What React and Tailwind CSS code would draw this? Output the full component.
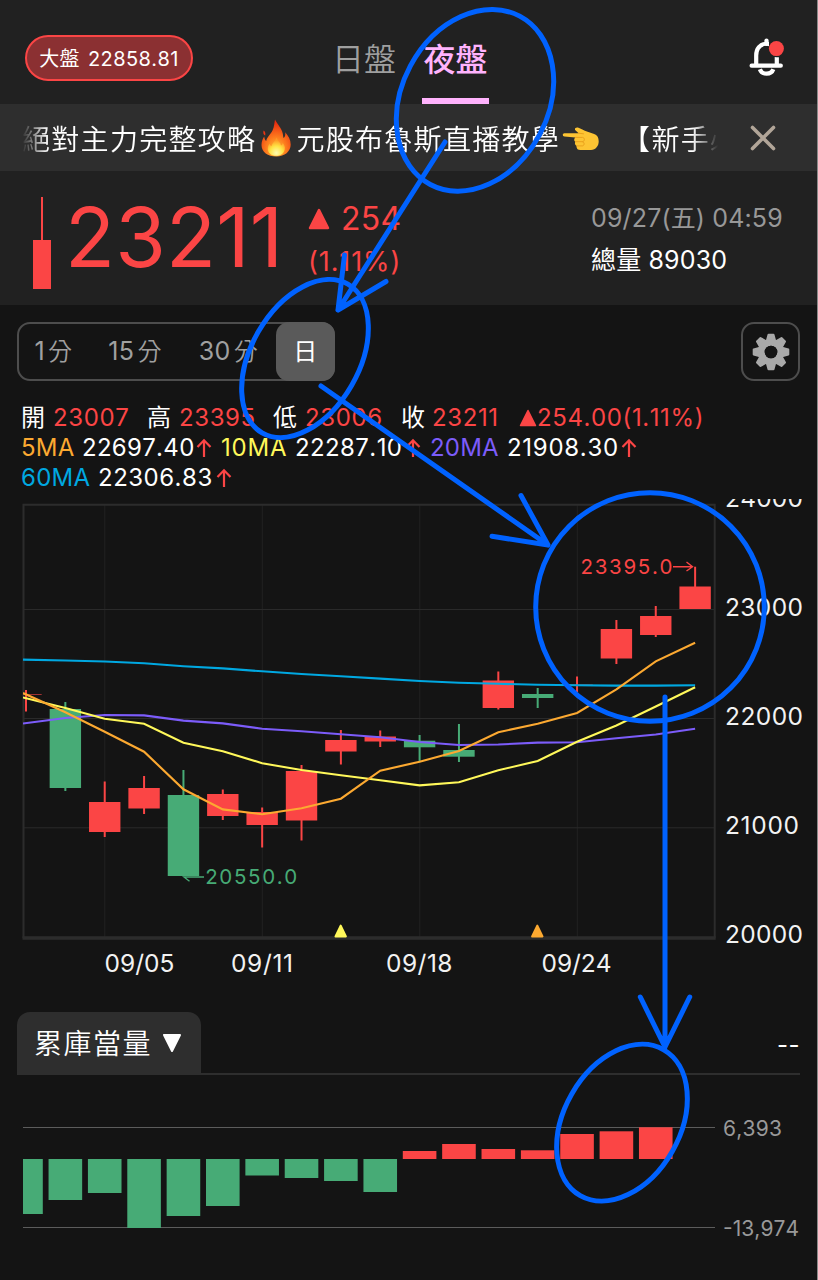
const RED = '#fb4545';
const GREEN = '#47ab76';

// distance between two trading days on the charts
const STEP = 39.36;
const dayX = (i) => 26 + i * STEP;

// [open/close top, bottom, wick top, wick bottom, color]
const candles = [
  [694, 695, 690, 711.5, RED],
  [709, 788, 702, 791, GREEN],
  [802, 832, 781.5, 837, RED],
  [788, 808.5, 776, 814, RED],
  [795, 876, 770, 876, GREEN],
  [794, 816, 789.5, 820, RED],
  [812, 825, 807.5, 847.5, RED],
  [771, 820.5, 765, 840.5, RED],
  [740, 751.5, 730, 764.5, RED],
  [736.5, 741.5, 730.5, 747, RED],
  [740.7, 747.3, 735, 761, GREEN],
  [750, 756.7, 724, 762, GREEN],
  [680.5, 708, 671.5, 709.5, RED],
  [694, 698, 688, 708, GREEN],
  [684.3, 685.3, 676.5, 692, RED],
  [629, 658.5, 620, 664, RED],
  [616, 635, 606, 637, RED],
  [586.5, 609, 566.7, 609, RED],
];

const averages = [
  {
    id: '60MA',
    color: '#00a8e1',
    values: [659.6, 660.5, 661.5, 663.3, 666.2, 668.4, 671.3, 674, 676.3, 678.6, 681, 682.7, 683.8, 684.8, 685.3, 685.6, 685.6, 685.2],
  },
  {
    id: '20MA',
    color: '#7c5cfa',
    values: [723.5, 718, 715, 715.4, 720.6, 723.4, 728.7, 731.2, 734.3, 737.2, 742, 745, 744.5, 742.6, 742.3, 738.3, 734.5, 728.7],
  },
  {
    id: '10MA',
    color: '#fff85a',
    values: [697.5, 708, 718.7, 723.7, 742.7, 751.2, 763.2, 770, 775.3, 780.3, 785.4, 782.3, 770.3, 761, 741.7, 725.5, 706.5, 687.3],
  },
  {
    id: '5MA',
    color: '#fca931',
    values: [693, 712.3, 731.7, 751.7, 789.3, 809.4, 814.3, 808.3, 798.7, 770.7, 761.7, 751, 732.3, 723.7, 713, 689.3, 661.3, 642.7],
  },
];

const priceLabels = [
  { y: 507, label: '24000' },
  { y: 616.3, label: '23000' },
  { y: 725.3, label: '22000' },
  { y: 834.3, label: '21000' },
  { y: 943.3, label: '20000' },
];

const dateLabels = [
  { x: 104.5, label: '09/05', width: 70 },
  { x: 231, label: '09/11', width: 62 },
  { x: 386, label: '09/18', width: 66.5 },
  { x: 541.5, label: '09/24', width: 70 },
];

// positive values sit above the zero line, negative ones below
const volumes = [-55, -41, -34, -69, -57, -47, -16.5, -19, -22, -33, 8, 15, 10, 8.7, 25, 27.7, 31.7];

function BellIcon() {
  return (
    <svg className="h-[40px] w-[38px]" viewBox="0 0 38 40" fill="none">
      <path d="M8.2 28V18.5C8.2 11.5 12 7.2 18.5 6.5C25 7.2 28.8 11.5 28.8 18.5V28" stroke="#fff" strokeWidth="4.2" />
      <path d="M18.5 7V3.5" stroke="#fff" strokeWidth="4.2" strokeLinecap="round" />
      <path d="M3.6 28.7H32.8" stroke="#fff" strokeWidth="4.2" strokeLinecap="round" />
      <path d="M11.9 32.3C13 35.4 15.4 36.7 18.6 36.7C21.8 36.7 24.2 35.4 25.3 32.3" stroke="#fff" strokeWidth="4.2" />
      <path d="M21 1H34V20.3H28.5C23.5 20.3 21 16.5 21 11.5Z" fill="#212121" />
      <circle cx="28.4" cy="11.6" r="7.5" fill={RED} />
    </svg>
  );
}

function GearIcon() {
  return (
    <svg className="size-[38px]" viewBox="-19 -19 38 38" fill="#a9a9a9">
      {[0, 45, 90, 135, 180, 225, 270, 315].map((angle) => (
        <path
          key={angle}
          d="M-4.2 -11L-2.5 -17.3H2.5L4.2 -11Z"
          stroke="#a9a9a9"
          strokeWidth="2"
          strokeLinejoin="round"
          transform={`rotate(${angle})`}
        />
      ))}
      <circle r="9.6" fill="none" stroke="#a9a9a9" strokeWidth="6.6" />
      <circle r="6.3" fill="#141414" />
    </svg>
  );
}

function FireIcon() {
  return (
    <svg className="h-[38px] w-[30px]" viewBox="0 0 30 38">
      <defs>
        <radialGradient id="flame" cx="0.5" cy="0.82" r="0.75">
          <stop offset="0" stopColor="#ffc83a" />
          <stop offset="0.45" stopColor="#fd7d1e" />
          <stop offset="1" stopColor="#e8290f" />
        </radialGradient>
        <radialGradient id="flameCore" cx="0.5" cy="0.85" r="0.7">
          <stop offset="0" stopColor="#fffcb0" />
          <stop offset="0.55" stopColor="#ffe344" />
          <stop offset="1" stopColor="#ff9a26" />
        </radialGradient>
      </defs>
      <path
        d="M14 0.5C15 3 19.5 8 21.2 12.5C22.3 15.5 22 18 22.6 19C24.2 18 24.6 15.3 24.2 13.2C27.2 16.5 29.7 20.8 29.7 25.5C29.7 32.5 23.7 37.5 15.3 37.5C6.8 37.5 0.5 33 0.5 26C0.5 22 2 19.5 3.2 17.5C3.5 19.5 4 21.3 5.2 22C6.2 17.5 9.7 15.3 11.6 11.3C13.4 7.5 13.2 4 14 0.5Z"
        fill="url(#flame)"
      />
      <path d="M2.6 11.5C4 12.4 4.7 14 4.2 16.4C2.4 15.7 1.9 13.6 2.6 11.5Z" fill="#ee3513" />
      <path
        d="M15.6 18.5C16 21.5 19.7 23.4 20 26.5C21.4 25.8 21.6 24.7 21.7 23.7C23.2 25.8 24.2 27.5 23.8 30C23.2 34 20 36.8 15.2 36.8C10.2 36.8 6.8 33.8 6.8 29.7C6.8 27.6 7.5 26 8.6 24.8C8.9 26 9.5 26.8 10.5 27.2C11.2 23.8 14.4 22.2 15.6 18.5Z"
        fill="url(#flameCore)"
      />
    </svg>
  );
}

function PointingHandIcon() {
  return (
    <svg className="h-[24px] w-[37px]" viewBox="0 0 37 24">
      <path
        d="M2.4 6.2C0.3 6.2 0.2 9.4 2.4 9.6L13.4 10.4C11.8 11.6 11.8 13.7 13.3 14.7C12.5 16.6 13 18.1 14.6 18.9C14.2 21.3 15.7 23 18.4 23H29C33.8 23 36.7 19 36.7 14.6C36.7 9.8 34.8 7.8 31.5 6.7C27.6 5.4 23.4 4.3 20.4 2.4L16.5 0.7C13.6 -0.4 11.8 2 13.7 3.6L16.6 6.2Z"
        fill="#fdc433"
      />
      <path d="M13.4 10.4H20.5C23 10.6 23 14.4 20.5 14.7H13.6M20.5 14.7C22.8 15 22.7 18.7 20.3 18.9H14.8" fill="none" stroke="#eaa11c" strokeWidth="1" strokeLinecap="round" />
      <path d="M16.6 6.2L21.5 6.8" stroke="#eaa11c" strokeWidth="1" strokeLinecap="round" />
    </svg>
  );
}

function TopBar() {
  return (
    <header className="flex h-[104px] items-start bg-[#212121]">
      <div className="mt-[35px] ml-[25px] flex h-[46px] w-[168px] items-center justify-center rounded-full border-2 border-[#fb4545] bg-[#8b3032] pt-px text-[20px] tracking-[0.4px] whitespace-nowrap text-white">
        大盤&nbsp;<span className="ml-[2px]">22858.81</span>
      </div>
      <nav className="ml-[139px] flex text-[32px]">
        <button className="h-[104px] w-[67px] pt-[15px] text-left font-[350] text-[#9f9f9f]">日盤</button>
        <button className="ml-[23px] h-[104px] w-[67px] border-b-[6px] border-[#ffb3fd] pt-[21px] text-center font-medium text-[#ffb3fd]">
          夜盤
        </button>
      </nav>
      <button className="mt-[37px] ml-[259px]">
        <BellIcon />
      </button>
    </header>
  );
}

function Marquee() {
  return (
    <div className="flex h-[67px] items-center bg-[#2e2e2e] text-white">
      <div className="ml-[22px] flex w-[696px] items-center overflow-hidden mask-[linear-gradient(to_right,transparent_0,#000_26px,#000_670px,transparent_696px)] text-[28px] font-[350] tracking-[1.3px] whitespace-nowrap">
        <span className="shrink-0 pt-[5px]">絕對主力完整攻略</span>
        <span className="ml-[5px] shrink-0">
          <FireIcon />
        </span>
        <span className="ml-[5px] shrink-0 pt-[5px]">元股布魯斯直播教學</span>
        <span className="ml-[2px] shrink-0 pt-[3px]">
          <PointingHandIcon />
        </span>
        <span className="ml-[23px] shrink-0 pt-[5px]">【新手必</span>
      </div>
      <button className="ml-[32px]">
        <svg className="size-[26px]" viewBox="0 0 26 26" stroke="#b1a598" strokeWidth="3.6" strokeLinecap="round">
          <path d="M2.5 2.5L23.5 23.5M23.5 2.5L2.5 23.5" />
        </svg>
      </button>
    </div>
  );
}

function PriceSummary() {
  return (
    <section className="flex h-[134px] bg-[#212121] text-[#fb4545]">
      <div className="mt-[26px] ml-[33px] flex h-[92px] w-[18px] flex-col items-center">
        <div className="h-[43px] w-[2px] bg-[#fb4545]" />
        <div className="w-full flex-1 bg-[#fb4545]" />
      </div>
      <div className="mt-[17px] ml-[14px] w-[243px] text-[82px] leading-[100px] tracking-[0.2px]">23211</div>
      <div className="mt-[29px] w-[120px]">
        <div className="flex items-center text-[32px] leading-[38px] tracking-[0.3px]">
          <svg className="size-[22px]" viewBox="0 0 22 22">
            <path d="M11 2L20 20H2Z" fill={RED} stroke={RED} strokeWidth="2.5" strokeLinejoin="round" />
          </svg>
          <span className="ml-[11px]">254</span>
        </div>
        <div className="mt-[6px] text-[27px] leading-[36px] tracking-[0.9px]">(1.11%)</div>
      </div>
      <div className="mt-[26px] ml-[163px] text-[25px] leading-[42px] tracking-[0.15px] whitespace-nowrap">
        <div className="text-[#989898]">09/27(五) 04:59</div>
        <div className="text-white">總量 89030</div>
      </div>
    </section>
  );
}

function Toolbar() {
  return (
    <div className="mt-[17px] mr-[17px] ml-[17px] flex h-[59px] justify-between">
      <div className="flex w-[318px] rounded-[13px] border-2 border-[#4d4d4d] text-[25px] tracking-[0.4px] text-[#a0a0a0]">
        <button className="w-[69px]">
          1<span className="ml-[3px] text-[24px] font-[350]">分</span>
        </button>
        <button className="w-[94px]">
          15<span className="ml-[3px] text-[24px] font-[350]">分</span>
        </button>
        <button className="w-[93px]">
          30<span className="ml-[3px] text-[24px] font-[350]">分</span>
        </button>
        <button className="-my-[2px] -mr-[2px] ml-auto w-[59px] rounded-[13px] bg-[#5a5a5a] text-[24px] text-white">日</button>
      </div>
      <button className="flex w-[59px] items-center justify-center rounded-[13px] border-2 border-[#4d4d4d]">
        <GearIcon />
      </button>
    </div>
  );
}

function MaValue({ name, value, nameClass, valueClass }) {
  return (
    <div className="flex">
      <span className={nameClass}>{name}</span>
      <span className={valueClass}>{value}</span>
      <svg className="mt-[5px] h-[20px] w-[16px]" viewBox="0 0 16 20" fill="none" stroke={RED} strokeWidth="2.2">
        <path d="M8 19V2.5M1.5 9L8 2.3L14.5 9" />
      </svg>
    </div>
  );
}

function Quotes() {
  return (
    <div className="mt-[21px] ml-[21px] text-[24px] tracking-[0.6px] text-white">
      <div className="flex h-[31px] leading-[32px] whitespace-nowrap">
        <span className="w-[32px]">開</span>
        <span className="w-[94px] text-[#fb4545]">23007</span>
        <span className="w-[32px]">高</span>
        <span className="w-[94px] text-[#fb4545]">23395</span>
        <span className="w-[32px]">低</span>
        <span className="w-[96px] text-[#fb4545]">23006</span>
        <span className="w-[31px]">收</span>
        <span className="w-[87px] text-[#fb4545]">23211</span>
        <svg className="mt-[7px] h-[18px] w-[18px]" viewBox="0 0 18 18">
          <path d="M9 1.5L16.5 16.5H1.5Z" fill={RED} stroke={RED} strokeWidth="1.5" strokeLinejoin="round" />
        </svg>
        <span className="text-[#fb4545]">254.00(1.11%)</span>
      </div>
      <div className="flex h-[30px] leading-[30px]">
        <MaValue name="5MA" value="22697.40" nameClass="w-[61px] tracking-[0.2px] text-[#fca931]" valueClass="w-[114px] tracking-[0.3px]" />
        <div className="ml-[9px]">
          <MaValue name="10MA" value="22287.10" nameClass="w-[74px] tracking-[0.8px] text-[#fff85a]" valueClass="w-[110px] tracking-[0.4px]" />
        </div>
        <div className="ml-[9px]">
          <MaValue name="20MA" value="21908.30" nameClass="w-[77px] tracking-[0.2px] text-[#7c5cfa]" valueClass="w-[114px] tracking-[0.7px]" />
        </div>
      </div>
      <div className="flex h-[30px] leading-[29px]">
        <MaValue name="60MA" value="22306.83" nameClass="w-[77px] tracking-[0.3px] text-[#00a8e1]" valueClass="w-[118px] tracking-[0.5px]" />
      </div>
    </div>
  );
}

function CandleChart() {
  return (
    <svg className="mt-[6px] block h-[491px] w-[817px]" viewBox="0 499 817 491">
      <defs>
        <clipPath id="plot">
          <rect x="23" y="504" width="692" height="436" />
        </clipPath>
      </defs>
      {[104.8, 262.3, 419.8, 577.3].map((x) => (
        <path key={x} d={`M${x} 505V938`} stroke="#212121" />
      ))}
      {[609.5, 718.5, 827.8].map((y) => (
        <path key={y} d={`M23 ${y}H715`} stroke="#2a2a2a" />
      ))}
      <path d="M23.5 938V504.7H714.7V938" fill="none" stroke="#2c2c2c" strokeWidth="2" />
      <path d="M22.5 938H715.7" stroke="#2c2c2c" strokeWidth="3.4" />

      <g clipPath="url(#plot)">
        {candles.map(([top, bottom, high, low, color], i) => (
          <g key={i} fill={color}>
            <rect x={dayX(i) - 1} y={high} width="2" height={low - high} />
            <rect x={dayX(i) - 15.7} y={top} width="31.4" height={bottom - top} opacity={bottom - top > 1.1 ? 1 : 0.6} />
          </g>
        ))}
        {averages.map(({ id, color, values }) => (
          <polyline
            key={id}
            points={values.map((y, i) => `${i === 0 ? 23 : dayX(i)},${y}`).join(' ')}
            fill="none"
            stroke={color}
            strokeWidth="2.1"
          />
        ))}
      </g>

      {/* high / low markers */}
      <text x="580.5" y="574.3" fontSize="20.5" textLength="92" fill={RED}>23395.0</text>
      <path d="M673 566.8H692M686.5 562L692.5 566.8L686.5 571" fill="none" stroke={RED} strokeWidth="1.4" />
      <text x="205.2" y="884.3" fontSize="20.5" textLength="92" fill={GREEN}>20550.0</text>
      <path d="M204 877H184L189.5 881.2" fill="none" stroke={GREEN} strokeWidth="1.4" />

      <path d="M340.7 925.5L346 936.5H335.4Z" fill="#fff85a" stroke="#fff85a" strokeWidth="1.8" strokeLinejoin="round" />
      <path d="M537.3 925.5L542.6 936.5H532Z" fill="#fca931" stroke="#fca931" strokeWidth="1.8" strokeLinejoin="round" />

      {priceLabels.map(({ y, label }) => (
        <text key={label} x="725" y={y} fontSize="24.5" textLength={label === '21000' ? 74 : 78} fill="#f2f2f2">
          {label}
        </text>
      ))}
      {dateLabels.map(({ x, label, width }) => (
        <text key={label} x={x} y="972" fontSize="24.5" textLength={width} fill="#f2f2f2">
          {label}
        </text>
      ))}
    </svg>
  );
}

function VolumePanel() {
  return (
    <section>
      <div className="mt-[22px] mr-[17px] ml-[17px] flex h-[63px] items-end justify-between border-b-2 border-[#2e2e2e]">
        <button className="flex h-[61px] w-[184px] items-center rounded-t-[13px] bg-[#2e2e2e] pt-[3px] pl-[17px] text-[28px] font-[350] tracking-[1.5px] text-white">
          累庫當量
          <svg className="-mt-[3px] ml-[10px] size-[20px]" viewBox="0 0 20 20">
            <path d="M2 2H18L10 18Z" fill="#fff" stroke="#fff" strokeWidth="2" strokeLinejoin="round" />
          </svg>
        </button>
        <span className="pb-[10px] text-[24px] tracking-[0.5px] text-white">--</span>
      </div>
      <svg className="block h-[205px] w-[817px]" viewBox="0 1075 817 205">
        <path d="M23 1127.5H715M23 1227.5H715" stroke="#5c5c5c" />
        <clipPath id="volumeArea">
          <rect x="23" y="1100" width="692" height="150" />
        </clipPath>
        <g clipPath="url(#volumeArea)">
          {volumes.map((v, i) => (
            <rect
              key={i}
              x={dayX(i) - 16.8}
              y={v > 0 ? 1159 - v : 1159}
              width="33.6"
              height={Math.abs(v)}
              fill={v > 0 ? RED : GREEN}
            />
          ))}
        </g>
        <text x="723" y="1135.5" fontSize="21" textLength="59" fill="#999">6,393</text>
        <text x="723" y="1236" fontSize="21" textLength="76" fill="#999">-13,974</text>
      </svg>
    </section>
  );
}

// hand-drawn guide marks floating above the screen
function Annotations() {
  return (
    <svg
      className="pointer-events-none absolute inset-0 h-[1280px] w-[818px]"
      viewBox="0 0 818 1280"
      fill="none"
      stroke="#0062ff"
      strokeWidth="5"
      strokeLinecap="round"
      strokeLinejoin="round"
    >
      <ellipse cx="475" cy="100.3" rx="73.2" ry="95.3" transform="rotate(28 475 100.3)" />
      <path d="M445 142L338 310M344.5 255L338 310L386 281.5" />
      <ellipse cx="305" cy="358.5" rx="53.8" ry="85.8" transform="rotate(30 305 358.5)" />
      <path d="M321 386L548 545M521 495.5L548 545L492 536.3" />
      <circle cx="650" cy="607" r="114.3" />
      <path d="M665 697V1047M640.3 997L665 1047L689.7 997" />
      <ellipse cx="622" cy="1122.7" rx="57.9" ry="84" transform="rotate(29.8 622 1122.7)" />
    </svg>
  );
}

export default function App() {
  return (
    <div className="relative h-[1280px] w-[818px] overflow-hidden border-r border-[#8a8a8a] bg-[#141414] font-['Inter','Noto_Sans_CJK_TC',sans-serif] [font-kerning:none]">
      <TopBar />
      <Marquee />
      <PriceSummary />
      <Toolbar />
      <Quotes />
      <CandleChart />
      <VolumePanel />
      <Annotations />
    </div>
  );
}
